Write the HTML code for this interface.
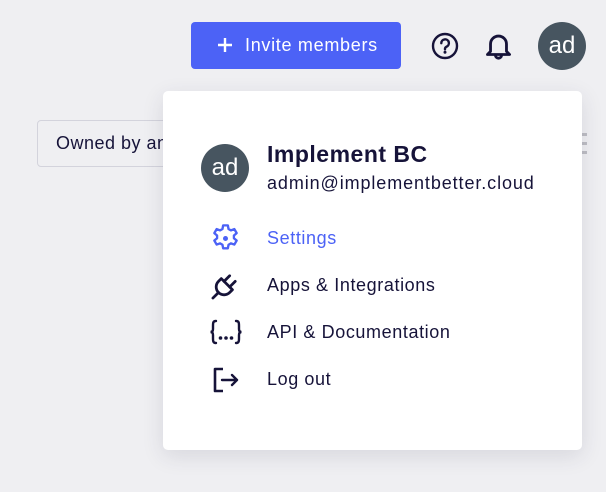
<!DOCTYPE html>
<html><head><meta charset="utf-8"><style>
*{margin:0;padding:0;box-sizing:border-box}
body{width:606px;height:492px;overflow:hidden;background:#efeff2;font-family:"Liberation Sans",sans-serif;position:relative;color:#161339}
.btn{position:absolute;left:191px;top:22px;width:210px;height:47px;background:#4c62f6;border-radius:4px;color:#fff;font-size:18px;line-height:47px;letter-spacing:0.7px}
.btn span{position:absolute;left:54px;top:0}
.av{position:absolute;border-radius:50%;background:#475560;color:#fff;text-align:center}
.owned{position:absolute;left:37px;top:120px;width:140px;height:47px;border:1px solid #d3d3dc;border-radius:4px;font-size:18px;line-height:45px;padding-left:18px;overflow:hidden;white-space:nowrap;letter-spacing:0.5px}
.panel{position:absolute;left:163px;top:91px;width:419px;height:359px;background:#fff;border-radius:5px;box-shadow:0 6px 22px rgba(40,40,70,.12)}
.bar{position:absolute;left:582px;width:5px;height:3px;background:#bdbdc3}
.item{position:absolute;left:267px;font-size:18px;letter-spacing:0.6px}
svg{position:absolute}
</style></head><body>
<div class="owned">Owned by any</div>
<div class="bar" style="top:133px"></div><div class="bar" style="top:142px"></div><div class="bar" style="top:151px"></div>
<div class="btn"><svg style="left:25px;top:14px" width="18" height="18" viewBox="0 0 18 18"><path d="M9 2V16M2 9H16" stroke="#fff" stroke-width="2.4"/></svg><span>Invite members</span></div>
<svg style="left:431px;top:32px" width="28" height="28" viewBox="0 0 28 28"><circle cx="14" cy="14" r="12" fill="none" stroke="#161339" stroke-width="2.4"/><path d="M10.3 11.2a3.8 3.8 0 1 1 5.2 3.5c-1 .5-1.5 1.1-1.5 2.2v.5" fill="none" stroke="#161339" stroke-width="2.4" stroke-linecap="round"/><circle cx="14" cy="20.3" r="1.5" fill="#161339"/></svg>
<svg style="left:485px;top:33px" width="27" height="27" viewBox="3 4 22 22"><path d="M7.5 19V13a6.5 6.5 0 0 1 13 0v6l2.5 2.5H5z" fill="none" stroke="#161339" stroke-width="2.3" stroke-linejoin="round"/><path d="M11.5 22a2.5 2.5 0 0 0 5 0" fill="none" stroke="#161339" stroke-width="2.3"/></svg>
<div class="av" style="left:538px;top:22px;width:48px;height:48px;font-size:24px;line-height:48px">ad</div>
<div class="panel"></div>
<div class="av" style="left:201px;top:144px;width:48px;height:48px;font-size:24px;line-height:48px">ad</div>
<div style="position:absolute;left:267px;top:141px;font-size:23px;font-weight:bold;letter-spacing:0.5px">Implement BC</div>
<div style="position:absolute;left:267px;top:173px;font-size:18px;letter-spacing:0.9px">admin@implementbetter.cloud</div>
<svg style="left:211px;top:224px" width="29" height="29" viewBox="1.5 1.5 21 21"><path d="M10.3 2.5h3.4l.5 2.6 1.7 1 2.5-.9 1.7 2.9-2 1.7v2l2 1.7-1.7 2.9-2.5-.9-1.7 1-.5 2.6h-3.4l-.5-2.6-1.7-1-2.5.9-1.7-2.9 2-1.7v-2l-2-1.7 1.7-2.9 2.5.9 1.7-1z" fill="none" stroke="#4c62f6" stroke-width="1.7" stroke-linejoin="round"/><circle cx="12" cy="12" r="1.8" fill="#4c62f6"/></svg>
<div class="item" style="top:228px;color:#4c62f6">Settings</div>
<svg style="left:209px;top:270px" width="32" height="32" viewBox="0 0 28 28"><g transform="translate(14 14) scale(1.15) rotate(45) translate(-14 -14)" fill="none" stroke="#161339" stroke-width="2.1" stroke-linecap="round" stroke-linejoin="round"><path d="M14 27V21"/><path d="M8 12h12v3a6 6 0 0 1-12 0z"/><path d="M11 12V6M17 12V6"/></g></svg>
<div class="item" style="top:275px">Apps &amp; Integrations</div>
<svg style="left:209px;top:318px" width="34" height="28" viewBox="0 0 34 28"><path d="M7 3C4 3 4 5 4 8v3c0 2-1 3-2.5 3C3 14 4 15 4 17v3c0 3 0 5 3 5M27 3c3 0 3 2 3 5v3c0 2 1 3 2.5 3-1.5 0-2.5 1-2.5 3v3c0 3 0 5-3 5" fill="none" stroke="#161339" stroke-width="2.4" stroke-linecap="round"/><circle cx="11.5" cy="20" r="1.8" fill="#161339"/><circle cx="17" cy="20" r="1.8" fill="#161339"/><circle cx="22.5" cy="20" r="1.8" fill="#161339"/></svg>
<div class="item" style="top:322px">API &amp; Documentation</div>
<svg style="left:211px;top:366px" width="30" height="28" viewBox="0 0 30 28"><path d="M12 3H4v22h8" fill="none" stroke="#161339" stroke-width="2.6" stroke-linejoin="round"/><path d="M11 14h15M21 9l5 5-5 5" fill="none" stroke="#161339" stroke-width="2.4" stroke-linecap="round" stroke-linejoin="round"/></svg>
<div class="item" style="top:369px">Log out</div>
</body></html>
